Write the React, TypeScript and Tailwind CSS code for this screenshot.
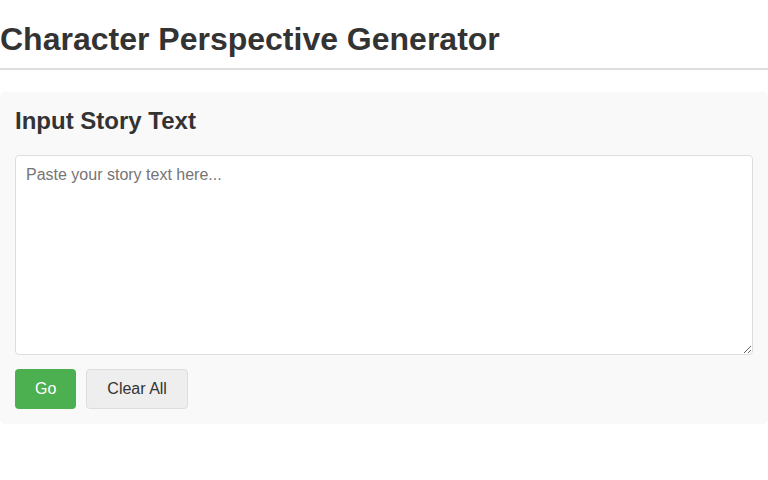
export default function App() {
  return (
    <div className="min-h-[480px] bg-white text-[#333]" style={{ fontFamily: '"Liberation Sans", Arial, sans-serif' }}>
      <h1 className="mt-[21px] mb-[22px] border-b-2 border-[#ddd] pb-[10px] text-[32px] font-bold leading-[37px]">
        Character Perspective Generator
      </h1>

      <div className="rounded-[5px] bg-[#f9f9f9] p-[15px]">
        <h2 className="mb-[20px] text-[24px] font-bold leading-[28px]">Input Story Text</h2>
        <textarea
          className="block h-[200px] w-full resize-y rounded-[4px] border border-[#ddd] bg-white p-[10px] text-[16px] leading-[18px] text-[#333] outline-none placeholder:text-[#757575]"
          placeholder="Paste your story text here..."
        />
        <div className="mt-[14px] flex gap-[10px]">
          <button className="h-10 rounded-[4px] bg-[#4caf50] px-5 text-[16px] text-white">Go</button>
          <button className="h-10 rounded-[4px] border border-[#ddd] bg-[#eee] px-5 text-[16px] text-[#333]">
            Clear All
          </button>
        </div>
      </div>
    </div>
  )
}
